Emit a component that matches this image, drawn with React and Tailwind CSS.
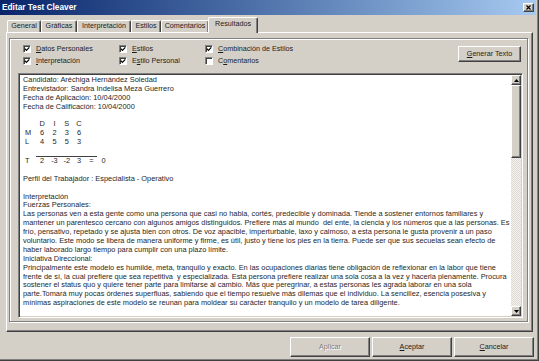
import React from 'react';

const raised =
  'bg-[#d4d0c8] border border-t-white border-l-white border-r-[#404040] border-b-[#404040] shadow-[inset_-1px_-1px_#808080]';

const textLines = [
  'Candidato: Aréchiga Hernández Soledad',
  'Entrevistador: Sandra Indelisa Meza Guerrero',
  'Fecha de Aplicación: 10/04/2000',
  'Fecha de Calificación: 10/04/2000',
];

const bodyLines = [
  'Perfil del Trabajador : Especialista - Operativo',
  '',
  'Interpretación',
  'Fuerzas Personales:',
  'Las personas ven a esta gente como una persona que casi no habla, cortés, predecible y dominada. Tiende a sostener entornos familiares y',
  'mantener un parentesco cercano con algunos amigos distinguidos. Prefiere más al mundo  del ente, la ciencia y los números que a las personas. Es',
  'frío, pensativo, repetado y se ajusta bien con otros. De voz apacible, imperturbable, laxo y calmoso, a esta persona le gusta provenir a un paso',
  'voluntario. Este modo se libera de manera uniforme y firme, es útil, justo y tiene los pies en la tierra. Puede ser que sus secuelas sean efecto de',
  'haber laborado largo tiempo para cumplir con una plazo límite.',
  'Iniciativa Direccional:',
  'Principalmente este modelo es humilde, meta, tranquilo y exacto. En las ocupaciones diarias tiene obligación de reflexionar en la labor que tiene',
  'frente de sí, la cual prefiere que sea repetitiva  y especializada. Esta persona prefiere realizar una sola cosa a la vez y hacerla plenamente. Procura',
  'sostener el status quo y quiere tener parte para limitarse al cambio. Más que peregrinar, a estas personas les agrada laborar en una sola',
  'parte.Tomará muy pocas órdenes superfluas, sabiendo que el tiempo resuelve más dilemas que el individuo. La sencillez, esencia posesiva y',
  'mínimas aspiraciones de este modelo se reunan para moldear su carácter tranquilo y un modelo de tarea diligente.',
];

function Line({ children }) {
  return <div className="h-[8.9px] leading-[8.9px] whitespace-pre">{children}</div>;
}

function Row({ label, values }) {
  return (
    <div className="flex h-[8.9px] leading-[8.9px]">
      <span className="w-[13px] pl-[2px]">{label}</span>
      {values.map((v, i) => (
        <span key={i} className="w-[12.3px] text-center">{v}</span>
      ))}
    </div>
  );
}

function Check({ checked, children }) {
  return (
    <div className="flex items-center h-[8px] gap-[5px]">
      <span className="w-[8px] h-[8px] bg-white border border-t-[#808080] border-l-[#808080] border-b-white border-r-white shadow-[inset_1px_1px_#404040] flex items-center justify-center">
        {checked && (
          <svg width="6" height="6" viewBox="0 0 6 6">
            <path d="M0.8 2.7 L2.4 4.3 L5.3 1.3" stroke="#000" strokeWidth="1.2" fill="none" />
          </svg>
        )}
      </span>
      <span className="leading-[8px] whitespace-nowrap">{children}</span>
    </div>
  );
}

function Tab({ label, w, selected }) {
  return (
    <div
      className={
        'flex items-center justify-center bg-[#d4d0c8] border-t border-l border-t-white border-l-white border-r border-r-[#404040] shadow-[inset_-1px_0_#808080] rounded-t-[2px] ' +
        (selected ? 'h-[16px] -mb-[1px] -ml-[1px] relative z-10 pb-[2px]' : 'h-[12px]')
      }
      style={{ width: w }}
    >
      {label}
    </div>
  );
}

export default function App() {
  return (
    <div className="w-[539px] h-[361px] bg-[#d4d0c8] flex flex-col text-[7.2px] text-[#1c1c1c] font-['Liberation_Sans',Arial,sans-serif] shadow-[inset_-1px_-1px_#404040,inset_-2px_-2px_#808080] overflow-hidden">
      {/* title bar */}
      <div className="w-[536px] h-[15px] shrink-0 flex items-center bg-gradient-to-r from-[#0a246a] to-[#a6caf0] pl-[2px] pr-[2px]">
        <span className="text-white font-bold text-[8.3px] leading-none">Editar Test Cleaver</span>
        <div className={'ml-auto w-[11px] h-[9px] flex items-center justify-center ' + raised}>
          <svg width="5" height="5" viewBox="0 0 5 5">
            <path d="M0.5 0.5 L4.5 4.5 M4.5 0.5 L0.5 4.5" stroke="#000" strokeWidth="1.1" />
          </svg>
        </div>
      </div>

      {/* tabs */}
      <div className="mt-[2px] h-[15px] shrink-0 flex items-end pl-[7px]">
        <Tab label="General" w={34} />
        <Tab label="Gráficas" w={36} />
        <Tab label="Interpretación" w={54} />
        <Tab label="Estilos" w={30} />
        <Tab label="Comentarios" w={48} />
        <Tab label="Resultados" w={50} selected />
      </div>

      {/* tab panel */}
      <div className="ml-[6px] w-[527px] h-[300px] shrink-0 bg-[#d4d0c8] border border-t-white border-l-white border-r-[#404040] border-b-[#404040] shadow-[inset_-1px_-1px_#808080]">
        <div className="ml-[2px] mt-[5px] w-[519px] h-[284px] border border-[#808080] shadow-[inset_1px_1px_white,1px_1px_white] flex flex-col">
          <div className="flex items-start pt-[6px] pl-[13px] pr-[6px]">
            <div className="grid grid-cols-[96px_86px_120px] gap-y-[4px]">
              <Check checked><u>D</u>atos Personales</Check>
              <Check checked><u>E</u>stilos</Check>
              <Check checked><u>C</u>ombinación de Estilos</Check>
              <Check checked><u>I</u>nterpretación</Check>
              <Check checked>E<u>s</u>tilo Personal</Check>
              <Check>C<u>o</u>mentarios</Check>
            </div>
            <div className={'ml-auto mt-[1px] w-[63px] h-[16px] flex items-center justify-center ' + raised}>
              <span><u>G</u>enerar Texto</span>
            </div>
          </div>

          {/* memo */}
          <div className="ml-[8px] mt-[8px] w-[505px] h-[245px] bg-white border border-t-[#808080] border-l-[#808080] border-b-white border-r-white shadow-[inset_1px_1px_#404040,inset_-1px_-1px_#d4d0c8] flex p-[1px] text-[7.4px] text-[#262626]">
            <div className="flex-1 overflow-hidden pl-[3px] pt-[1px]">
              {textLines.map((t, i) => (
                <Line key={i}>{t}</Line>
              ))}
              <Line>{''}</Line>
              <Row label="" values={['D', 'I', 'S', 'C']} />
              <Row label="M" values={['6', '2', '3', '6']} />
              <Row label="L" values={['4', '5', '5', '3']} />
              <Line>{''}</Line>
              <div className="flex h-[8.9px] leading-[8.9px] mt-[1px]">
                <span className="w-[13px] pl-[2px]">T</span>
                <div className="flex border-t border-[#404040] -mt-[1px]">
                  {['2', '-3', '-2', '3', '='].map((v, i) => (
                    <span key={i} className="w-[12.3px] text-center">{v}</span>
                  ))}
                </div>
                <span className="w-[12.3px] text-center">0</span>
              </div>
              <Line>{''}</Line>
              {bodyLines.map((t, i) => (
                <Line key={i}>{t}</Line>
              ))}
            </div>

            {/* scrollbar */}
            <div className="w-[10px] flex flex-col">
              <div className={'h-[10px] flex items-center justify-center ' + raised}>
                <svg width="5" height="3" viewBox="0 0 5 3">
                  <path d="M2.5 0 L5 3 L0 3 Z" fill="#000" />
                </svg>
              </div>
              <div className={'h-[73px] ' + raised}></div>
              <div className="flex-1 bg-[image:repeating-conic-gradient(#dcd9d2_0_25%,#f4f3f0_0_50%)] bg-[length:2px_2px]"></div>
              <div className={'h-[10px] flex items-center justify-center ' + raised}>
                <svg width="5" height="3" viewBox="0 0 5 3">
                  <path d="M0 0 L5 0 L2.5 3 Z" fill="#000" />
                </svg>
              </div>
            </div>
          </div>
        </div>
      </div>

      {/* buttons */}
      <div className="mt-[5px] flex justify-end gap-[2px] pr-[5px]">
        <div className={'w-[80px] h-[20px] flex items-center justify-center text-[#808080] [text-shadow:1px_1px_#ffffff] ' + raised}>
          Aplicar
        </div>
        <div className={'w-[80px] h-[20px] flex items-center justify-center ' + raised}>
          <span><u>A</u>ceptar</span>
        </div>
        <div className={'w-[80px] h-[20px] flex items-center justify-center ' + raised}>
          <span><u>C</u>ancelar</span>
        </div>
      </div>
    </div>
  );
}
